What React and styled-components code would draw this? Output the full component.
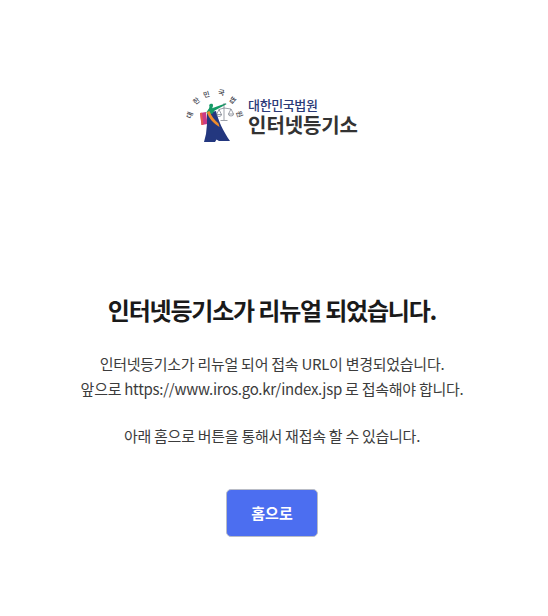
import React from "react";
import styled, { createGlobalStyle } from "styled-components";

const Global = createGlobalStyle`
  html, body { margin: 0; padding: 0; background: #fff; }
  body { font-family: "Noto Sans CJK KR", "Noto Sans", sans-serif; }
`;
const Page = styled.main`
  width: 544px; height: 616px; box-sizing: border-box; overflow: hidden;
  padding-top: 88px; display: flex; flex-direction: column; align-items: center;
`;
const LogoRow = styled.div`
  display: flex; align-items: flex-start; height: 56px; margin-left: -2px;
`;
const LogoMark = styled.svg`width: 64px; height: 56px; flex: none;`;
const LogoText = styled.div`
  display: flex; flex-direction: column; padding-top: 9px;
`;
const Court = styled.span`
  font-size: 13px; line-height: 16px; font-weight: 500; color: #2b3a78; letter-spacing: -0.4px;
`;
const Registry = styled.span`
  font-size: 20px; line-height: 24px; font-weight: 700; color: #333; letter-spacing: -0.1px;
`;
const Title = styled.h1`
  margin: 148px 0 0; font-size: 24px; line-height: 36px; font-weight: 700; color: #1a1a1a; letter-spacing: -1.2px;
`;
const Message = styled.p`
  margin: 24px 0 0; font-size: 15px; line-height: 24.500px; font-weight: 400; color: #3c3c3c; text-align: center; letter-spacing: -0.27px;
`;
const Notice = styled(Message)`margin-top: 23px;`;
const HomeButton = styled.button`
  margin-top: 40px; width: 92px; height: 48px; box-sizing: border-box;
  background: #4c6ef0; border: 1px solid #b9bcc6; border-radius: 5px;
  color: #fff; font: 700 15px/1 "Noto Sans CJK KR", sans-serif; cursor: pointer;
`;

const Mark = () => (
  <LogoMark viewBox="0 0 64 56">
    <g fontSize="7" fontWeight="500" fill="#3d3d4a" fontFamily="'Noto Sans CJK KR', sans-serif" textAnchor="middle">
      <text x="8" y="28" transform="rotate(-70 8 28)">대</text>
      <text x="14" y="15" transform="rotate(-40 14 15)">한</text>
      <text x="23" y="9" transform="rotate(-15 23 9)">민</text>
      <text x="37" y="7" transform="rotate(10 37 7)">국</text>
      <text x="47" y="14" transform="rotate(40 47 14)">법</text>
      <text x="53" y="27" transform="rotate(70 53 27)">원</text>
    </g>
    <path d="M16 25l6-1 1.500 12-6 1z" fill="#c93a86" />
    <path d="M16 25l2-.3 1.500 12-2 .3z" fill="#e4574f" />
    <path d="M23 25l9-2c2 9 7 20 14 30H35l-2.500-1.500-1.500 2.500H20l2-8 1-10z" fill="#23377f" />
    <path d="M25 17.500c.5-2 4-2.500 4-.2 0 1.300-.5 2.300-1 3l14-5 .4 1-12 6.500-2 3-5 .5-1-2 2-3c1-1.200 1-2.300 1-3.800z" fill="#159a66" />
    <path d="M23 24l2.500-1c1.500 5 5 9 9 12.500l1 3.500c-6-3.500-11-9-12.500-15z" fill="#ef8c2a" />
    <g stroke="#5a6270" strokeWidth=".6" fill="none">
      <path d="M40 15v17M36.500 32.500h7" />
      <path d="M35 21.500l5-1.500 7 1" />
      <path d="M35 21.500l-2.500 5h5l-2.500-5M47 21l-2.500 5h5l-2.500-5" />
      <path d="M32.500 26.500a2.500 2 0 0 0 5 0M44.500 26a2.500 2 0 0 0 5 0" />
    </g>
  </LogoMark>
);

export default function App() {
  return (
    <>
      <Global />
      <Page>
        <LogoRow>
          <Mark />
          <LogoText>
            <Court>대한민국법원</Court>
            <Registry>인터넷등기소</Registry>
          </LogoText>
        </LogoRow>
        <Title>인터넷등기소가 리뉴얼 되었습니다.</Title>
        <Message>
          인터넷등기소가 리뉴얼 되어 접속 URL이 변경되었습니다.
          <br />
          앞으로 https://www.iros.go.kr/index.jsp 로 접속해야 합니다.
        </Message>
        <Notice>아래 홈으로 버튼을 통해서 재접속 할 수 있습니다.</Notice>
        <HomeButton type="button">홈으로</HomeButton>
      </Page>
    </>
  );
}
